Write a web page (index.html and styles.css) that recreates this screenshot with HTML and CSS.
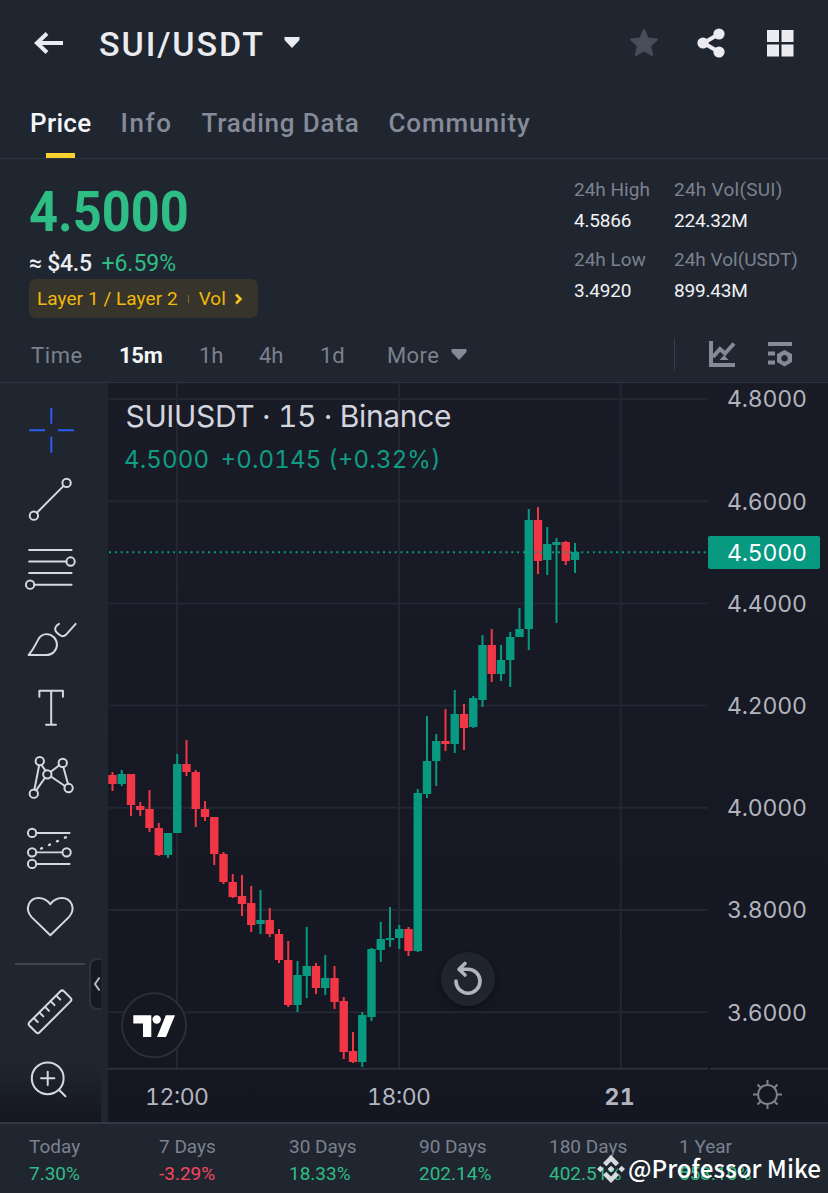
FILE: index.html
```html
<!DOCTYPE html>
<html lang="en">
<head>
    <meta charset="UTF-8">
    <meta name="viewport" content="width=device-width, initial-scale=1.0">
    <title>SUI/USDT</title>
    <link rel="stylesheet" href="styles.css">
</head>
<body>

    <!-- Header -->
    <header class="header">
        <svg class="back" width="30" height="24" viewBox="0 0 30 24"><path d="M29 12H3M13 2.5L3 12l10 9.500"/></svg>
        <h1>SUI/USDT</h1>
        <svg class="caret" width="16" height="12" viewBox="0 0 16 12"><path d="M.5 0h15v3L8 11 .5 3z"/></svg>
        <div class="header-icons">
            <svg class="star" width="30" height="30" viewBox="0 0 30 30"><path d="M15 2l3.800 8.600 9.200 1-6.900 6.200 2 9.200-8.100-4.500L6.900 27l2-9.200L2 11.600l9.200-1z"/></svg>
            <svg class="share" width="30" height="30" viewBox="0 0 30 30"><path d="M23 6L7.500 15 23 24"/><circle cx="23" cy="6" r="5.600"/><circle cx="7" cy="15" r="5.600"/><circle cx="23" cy="24" r="5.600"/></svg>
            <svg class="grid-icon" width="28" height="28" viewBox="0 0 28 28"><path d="M1 1h12v12H1zM15.500 1h12v12h-12zM1 15.500h12v12H1zM15.500 15.500h12v12h-12z"/></svg>
        </div>
    </header>

    <!-- Tabs -->
    <nav class="tabs">
        <a class="tab active">Price</a>
        <a class="tab info">Info</a>
        <a class="tab data">Trading Data</a>
        <a class="tab community">Community</a>
    </nav>

    <!-- Price summary -->
    <section class="summary">
        <div class="price-box">
            <div class="price">4.5000</div>
            <div class="fiat"><span class="usd">≈ $4.5</span> <span class="change">+6.59%</span></div>
            <div class="tag">
                <span class="tag-name">Layer 1 / Layer 2</span>
                <i class="tag-line"></i>
                <span>Vol</span>
                <svg width="9" height="12" viewBox="0 0 9 12"><path d="M2 1.500L6.500 6 2 10.500"/></svg>
            </div>
        </div>
        <div class="stats">
            <div class="label">24h High</div>
            <div class="label sui">24h Vol(SUI)</div>
            <div class="value">4.5866</div>
            <div class="value">224.32M</div>
            <div class="label">24h Low</div>
            <div class="label">24h Vol(USDT)</div>
            <div class="value">3.4920</div>
            <div class="value">899.43M</div>
        </div>
    </section>

    <!-- Intervals -->
    <nav class="intervals">
        <a class="time">Time</a>
        <a class="m15 active">15m</a>
        <a class="h1">1h</a>
        <a class="h4">4h</a>
        <a class="d1">1d</a>
        <a class="more">More</a>
        <svg class="more-caret" width="16" height="12" viewBox="0 0 16 12"><path d="M.5 0h15v3L8 11 .5 3z"/></svg>
        <div class="interval-icons">
            <svg width="28" height="28" viewBox="0 0 28 28"><path class="line" d="M3 1v24h24M5 17l7-8 5 4.500 9-10"/><path d="M11.500 20l4.500-5 4.500 5z"/></svg>
            <svg width="26" height="26" viewBox="0 0 26 26"><path d="M1 1h24v4H1zM1 10.500h7v4H1zM1 19.500h7v4H1z"/><path fill-rule="evenodd" d="M17.500 9l7.500 4v8l-7.500 4.500L10 21v-8zM17.500 14a3.300 3.300 0 1 0 .01 0z"/></svg>
        </div>
    </nav>

    <!-- Chart -->
    <main class="chart-area">
        <aside class="toolbar">
            <svg class="tool cross" viewBox="-30 -35 60 70"><path d="M1.300 -22V-6M1.300 7V23M-21 .5H-5M8 .5H24"/></svg>
            <svg class="tool" viewBox="-30 -35 60 70"><circle cx="16.700" cy="-17" r="4.200"/><circle cx="-16.200" cy="16" r="4.200"/><path d="M13.700 -14L-13.200 13"/></svg>
            <svg class="tool" viewBox="-30 -35 60 70"><path d="M-21 -19H21.700M-21 -7.300H16.500M-21 4.300H21.700M-15.800 16H21.700"/><circle cx="20.700" cy="-7.300" r="4.200"/><circle cx="-20" cy="16" r="4.200"/></svg>
            <svg class="tool" viewBox="-30 -35 60 70"><path d="M-21.500 16.300C-12 6 -13 -4.700 -3.500 -4.700A10.500 10.500 0 0 1 -3.500 16.300ZM9 -15C4.500 -12.500 4 -9 7 -6L9.500 -4Q13 -1 16 -4L25.800 -15"/></svg>
            <svg class="tool" viewBox="-30 -35 60 70"><path d="M-10.700 -11V-17.200H13V-11M1.200 -17.200V17M-4 17H6"/></svg>
            <svg class="tool" viewBox="-30 -35 60 70"><path d="M-15.700 12L-10.900 -12.700M-8.600 -12.900L-4.500 -7.300M.8 -6L9.400 -12.700M13.400 -10.800L18.100 6.200M15 8.300L.9 -1.300M-5 -.1L-13.900 12.600"/><circle cx="-10.300" cy="-16.700" r="4.200"/><circle cx="12.800" cy="-15" r="4.200"/><circle cx="-2.700" cy="-3.500" r="4.200"/><circle cx="-16.300" cy="16" r="4.200"/><circle cx="18.700" cy="10.300" r="4.200"/></svg>
            <svg class="tool" viewBox="-30 -35 60 70"><path d="M-13.800 -15H19.700M-13.800 4.600H12.500M-13.800 16.200H19.700"/><path class="dots" d="M-9 .8L16 -10.600"/><circle cx="-18" cy="-15" r="4.200"/><circle cx="-18" cy="4.600" r="4.200"/><circle cx="16.700" cy="4.600" r="4.200"/><circle cx="-18" cy="16.200" r="4.200"/></svg>
            <svg class="tool" viewBox="-30 -35 60 70"><path d="M.3 18.500L-18.500 .3C-26 -8 -21 -19 -11.500 -19C-6 -19 -2.500 -16.500 .3 -12.700C3 -16.500 6.500 -19 12 -19C21.500 -19 26.500 -8 19 .3Z"/></svg>
            <hr>
            <svg class="tool" viewBox="-30 -35 60 70"><g transform="rotate(-45)"><rect x="-24.500" y="-7.200" width="49" height="14.400" rx="2.500"/><path d="M-16 -7v5.500M-8 -7v5.500M0 -7v5.500M8 -7v5.500M16 -7v5.500"/></g></svg>
            <svg class="tool" viewBox="-30 -35 60 70"><circle cx="-2.300" cy="-2.500" r="16"/><path d="M-9 -2.500H4.400M-2.300 -9.200V4.200M9 9L15.500 15.500"/></svg>
            <div class="fold"><svg width="10" height="16" viewBox="0 0 10 16"><path d="M8.500 1.500L4 8l4.500 6.500"/></svg></div>
        </aside>

        <svg class="chart" id="chart" width="720" height="739" viewBox="108 383 720 739">
            <g class="grid" id="grid"></g>
            <g id="candles"></g>
            <path class="last-line" d="M109 552.300H708"/>
            <path class="axis-line" d="M108 1068.700H708M710 1068.700H828"/>

            <text class="symbol" x="125.500" y="427" textLength="326">SUIUSDT · 15 · Binance</text>
            <text class="quote" x="124" y="468" textLength="85">4.5000</text>
            <text class="quote" x="220.500" y="468" textLength="220">+0.0145 (+0.32%)</text>

            <g id="labels"></g>
            <rect class="last-tag" x="708" y="536" width="112" height="33" rx="2"/>
            <text class="last-text" x="727" y="560.500" textLength="80">4.5000</text>

            <text class="axis" x="145" y="1105" textLength="64">12:00</text>
            <text class="axis" x="367" y="1105" textLength="64">18:00</text>
            <text class="axis bold" x="604.500" y="1105" textLength="30">21</text>
            <g class="sun" transform="translate(767.500 1094.500)">
                <circle r="9.500"/>
                <path d="M0 -10v-4.500M0 10v4.500M-10 0h-4.500M10 0h4.500M-7 -7l-3 -3M7 -7l3 -3M-7 7l-3 3M7 7l3 3"/>
            </g>

            <!-- TradingView badge -->
            <circle class="badge" cx="154" cy="1025.300" r="32"/>
            <path class="badge-logo" d="M133.300 1015.300H151.300V1037H143V1023.500H133.300zM165.800 1015.300H175L166 1037H157z"/>
            <circle class="badge-logo" cx="156.700" cy="1019.500" r="4.200"/>

            <!-- Reset button -->
            <circle class="reset" cx="468" cy="979" r="27"/>
            <path class="reset-icon" d="M460 969.200H468A12 12 0 1 1 456 981M465 963.500L459 969.200L465 975"/>
        </svg>
    </main>

    <!-- Performance -->
    <footer class="performance">
        <div><span>Today</span><b>7.30%</b></div>
        <div><span>7 Days</span><b class="down">-3.29%</b></div>
        <div><span>30 Days</span><b>18.33%</b></div>
        <div><span>90 Days</span><b>202.14%</b></div>
        <div><span>180 Days</span><b>402.51%</b></div>
        <div><span>1 Year</span><b>558.10%</b></div>
        <div class="author">
            <svg width="28" height="28" viewBox="0 0 28 28"><path d="M14 0l8 8-3.300 3.300L14 6.600l-4.700 4.700L6 8zM14 28l8-8-3.300-3.300-4.700 4.700-4.700-4.700L6 20zM3.300 10.700L6.600 14l-3.300 3.300L0 14zM24.700 10.700L28 14l-3.300 3.300-3.300-3.300zM14 10.700l3.300 3.300-3.300 3.300-3.300-3.300z"/></svg>
            <span>@Professor Mike</span>
        </div>
    </footer>

    <script>
        // [high, body top, body bottom, low, up]
        const candles = [
            [772, 775, 784, 791, 0], [770, 774, 784, 786, 1], [774, 774, 805, 816, 0], [802, 806, 810, 816, 0],
            [790, 809, 828, 832, 0], [823, 828, 855, 856, 0], [833, 833, 855, 858, 1], [754, 764, 833, 833, 1],
            [740, 764, 772, 776, 0], [770, 772, 809, 827, 0], [801, 809, 817, 821, 0], [817, 817, 854, 865, 0],
            [852, 854, 882, 884, 0], [874, 882, 897, 898, 0], [875, 896, 904, 916, 0], [886, 903, 925, 932, 0],
            [890, 920, 924, 934, 1], [908, 920, 934, 937, 0], [929, 934, 960, 963, 0], [941, 960, 1005, 1007, 0],
            [961, 975, 1005, 1012, 1], [927, 966, 976, 998, 1], [963, 966, 988, 994, 0], [955, 978, 988, 995, 1],
            [966, 978, 1002, 1009, 0], [997, 1001, 1052, 1059, 0], [1032, 1051, 1062, 1063, 0], [1012, 1015, 1062, 1067, 1],
            [948, 949, 1017, 1021, 1], [922, 939, 950, 962, 1], [907, 938, 940, 947, 1], [925, 929, 938, 949, 1],
            [927, 929, 951, 956, 0], [789, 793, 951, 952, 1], [716, 761, 794, 798, 1], [734, 741, 761, 786, 1],
            [709, 741, 744, 751, 0], [690, 714, 744, 753, 1], [704, 714, 728, 750, 0], [696, 698, 727, 728, 1],
            [635, 645, 700, 707, 1], [629, 645, 674, 682, 0], [645, 660, 674, 681, 1], [632, 637, 660, 687, 1],
            [608, 629, 637, 637, 1], [509, 520, 629, 650, 1], [507, 520, 561, 574, 0], [527, 544, 560, 575, 1],
            [538, 542, 545, 623, 1], [541, 542, 561, 565, 0], [543, 552, 560, 573, 1]
        ];

        let html = '';
        candles.forEach(([high, top, bottom, low, up], i) => {
            const x = 112.5 + i * 9.25;
            html += `<g class="${up ? 'up' : 'fall'}">
                <rect x="${x - 1}" y="${high}" width="2" height="${low - high}"/>
                <rect x="${x - 4.2}" y="${top}" width="8.4" height="${bottom - top}"/>
            </g>`;
        });
        document.getElementById('candles').innerHTML = html;

        let grid = '<path d="M177 383V1068M399 383V1068M620.7 383V1068"/>';
        let labels = '';
        for (let i = 0; i < 7; i++) {
            const y = 399 + i * 102.2;
            grid += `<path d="M108 ${y}H708"/>`;
            labels += `<text class="axis" x="727" y="${y + 8.4}" textLength="80">${(4.8 - i * 0.2).toFixed(4)}</text>`;
        }
        document.getElementById('grid').innerHTML = grid;
        document.getElementById('labels').innerHTML = labels;
    </script>

</body>
</html>
```
FILE: styles.css
```css
/* Dark Theme */
* {
    box-sizing: border-box;
}

body {
    background-color: #202630;
    color: #eaecef;
    font-family: Roboto, Arial, sans-serif;
    margin: 0;
    width: 828px;
    height: 1193px;
    overflow: hidden;
}

svg {
    display: block;
    flex: none;
}

/* Header */
.header {
    display: flex;
    align-items: center;
    height: 86px;
    padding: 0 34px 1px 34px;
}

.header h1 {
    margin: 2px 0 0 35px;
    width: 165px;
    font-size: 34px;
    font-weight: 500;
    letter-spacing: 1.9px;
    white-space: nowrap;
}

.back {
    fill: none;
    stroke: #eaecf2;
    stroke-width: 4;
}

.caret {
    margin-left: 20px;
    fill: #eaecf2;
}

.header-icons {
    display: flex;
    align-items: center;
    gap: 38px;
    margin-left: auto;
    fill: #eaecf2;
}

.star {
    fill: #474d59;
    stroke: #474d59;
    stroke-width: 2;
    stroke-linejoin: round;
}

.share {
    margin-right: 2px;
    margin-left: -1px;
}

.share path {
    fill: none;
    stroke: #eaecf2;
    stroke-width: 4;
}

/* Tabs */
.tabs {
    display: flex;
    gap: 29px;
    height: 73px;
    padding-left: 30px;
    border-bottom: 1px solid #2d333e;
}

.tab {
    position: relative;
    height: 72px;
    line-height: 75px;
    font-size: 26px;
    font-weight: 500;
    color: #858b98;
    white-space: nowrap;
}

.tab.info { letter-spacing: 1.6px; }
.tab.data { letter-spacing: 0.8px; }
.tab.community { letter-spacing: 0.9px; }

.tab.active {
    color: #f5f6fa;
    letter-spacing: 0.3px;
}

.tab.active::after {
    content: "";
    position: absolute;
    left: 16px;
    bottom: 0;
    width: 29px;
    height: 5px;
    background-color: #fcd02f;
}

/* Price summary */
.summary {
    display: flex;
    justify-content: space-between;
    height: 171px;
    padding: 0 24px 0 29px;
}

.price {
    height: 75px;
    padding-top: 17px;
    line-height: 72px;
    font-size: 55px;
    font-weight: 700;
    color: #2ebd85;
    transform: scaleX(0.92);
    transform-origin: left;
}

.fiat {
    height: 45px;
    padding-top: 15px;
    line-height: 30px;
    font-size: 23px;
    white-space: nowrap;
}

.usd {
    font-weight: 500;
    letter-spacing: -0.3px;
}

.change {
    margin-left: 4px;
    color: #2ebd85;
}

.tag {
    display: flex;
    align-items: center;
    width: 229px;
    height: 39px;
    padding: 0 8px;
    border-radius: 7px;
    background-color: #37342b;
    color: #f0b90b;
    font-size: 19px;
    white-space: nowrap;
}

.tag-name {
    letter-spacing: 0.06px;
}

.tag-line {
    width: 1px;
    height: 8px;
    margin: 0 10px;
    background-color: #86701f;
}

.tag svg {
    margin-left: 8px;
    fill: none;
    stroke: #f5c21b;
    stroke-width: 2.6;
}

.stats {
    display: grid;
    grid-template-columns: 100px 130px;
    grid-template-rows: 31px 39px 31px 31px;
    padding-top: 15px;
    line-height: 31px;
    font-size: 19px;
    white-space: nowrap;
}

.label {
    color: #7b818e;
}

.label.sui {
    letter-spacing: 0.25px;
}

.value {
    color: #f0f1f5;
    letter-spacing: -0.2px;
}

/* Intervals */
.intervals {
    display: flex;
    align-items: center;
    height: 53px;
    padding: 0 35px 4px 31px;
    border-bottom: 1px solid #2d333e;
    font-size: 22px;
    color: #7b818e;
}

.intervals a {
    padding-top: 4px;
    line-height: 30px;
    white-space: nowrap;
}

.intervals .active {
    color: #f5f6fa;
    font-weight: 700;
}

.time { width: 88px; letter-spacing: 0.6px; }
.m15 { width: 80px; letter-spacing: -0.3px; }
.h1 { width: 60px; }
.h4 { width: 61px; }
.d1 { width: 67px; }
.more { width: 64px; letter-spacing: 0.4px; }

.more-caret {
    margin-top: 2px;
    fill: #848a97;
}

.interval-icons {
    display: flex;
    align-items: center;
    gap: 31px;
    height: 32px;
    margin-left: auto;
    padding-left: 33px;
    border-left: 1px solid #373d48;
    fill: #848a97;
}

.interval-icons .line {
    fill: none;
    stroke: #848a97;
    stroke-width: 4;
}

/* Chart */
.chart-area {
    display: flex;
    justify-content: space-between;
    height: 739px;
}

.toolbar {
    position: relative;
    width: 101px;
    padding-top: 12px;
    background: linear-gradient(#202630 92%, #14161f);
}

.tool {
    width: 60px;
    height: 69.6px;
    margin-left: 20px;
    fill: none;
    stroke: #d5d8e0;
    stroke-width: 2;
    stroke-linecap: round;
    stroke-linejoin: round;
}

.cross {
    stroke: #2c5cf0;
    stroke-linecap: butt;
}

.dots {
    stroke-width: 2.4;
    stroke-dasharray: 1 7.8;
}

.toolbar hr {
    width: 70px;
    height: 2px;
    margin: 11px 0 12px 15px;
    border: 0;
    background-color: #41454f;
}

.fold {
    position: absolute;
    right: 0;
    top: 575px;
    width: 12px;
    height: 52px;
    padding-top: 16px;
    border: 2px solid #2d323d;
    border-right: 0;
    border-radius: 8px 0 0 8px;
    background-color: #161924;
}

.fold svg {
    fill: none;
    stroke: #b6b9c3;
    stroke-width: 2;
}

.chart {
    background: linear-gradient(#191b27, #141621);
    font-family: Inter, Roboto, sans-serif;
    font-variant-numeric: tabular-nums;
}

.grid path {
    stroke: #232732;
    stroke-width: 2;
}

.axis-line {
    stroke: #2b303b;
    stroke-width: 2;
}

.up {
    fill: #089981;
}

.fall {
    fill: #f23645;
}

.last-line {
    stroke: #089981;
    stroke-width: 2;
    stroke-dasharray: 2 3.83;
}

.last-tag {
    fill: #089981;
}

.last-text {
    fill: #fff;
    font-size: 23px;
}

.symbol {
    fill: #d3d5de;
    font-size: 30px;
}

.quote {
    fill: #109c84;
    font-size: 24px;
}

.axis {
    fill: #b2b5be;
    font-size: 23px;
}

.bold {
    font-weight: 700;
}

.sun {
    fill: none;
    stroke: #7e828d;
    stroke-width: 2;
}

.badge {
    fill: #151721;
    stroke: #2a2e39;
    stroke-width: 2;
}

.badge-logo {
    fill: #fff;
}

.reset {
    fill: #1f242e;
    filter: drop-shadow(0 2px 3px rgba(0, 0, 0, 0.4));
}

.reset-icon {
    fill: none;
    stroke: #b2b5be;
    stroke-width: 3.6;
    stroke-linecap: round;
    stroke-linejoin: round;
}

/* Performance */
.performance {
    position: relative;
    display: grid;
    grid-template-columns: repeat(6, 130px);
    height: 71px;
    padding: 9px 0 0 29px;
    border-top: 2px solid #323843;
    font-size: 19px;
    line-height: 27px;
    white-space: nowrap;
}

.performance span {
    display: block;
    color: #7b818e;
}

.performance b {
    display: block;
    font-weight: 400;
    color: #2ebd85;
}

.performance .down {
    color: #f6465d;
}

.performance .author {
    position: absolute;
    left: 597px;
    top: 31px;
    display: flex;
    align-items: center;
    gap: 3px;
    fill: #d9dadd;
}

.performance .author span {
    margin-top: -3px;
    color: #fff;
    font-family: "Noto Sans CJK SC", "Noto Sans", sans-serif;
    font-size: 24.2px;
    font-weight: 500;
    line-height: 30px;
}
```
